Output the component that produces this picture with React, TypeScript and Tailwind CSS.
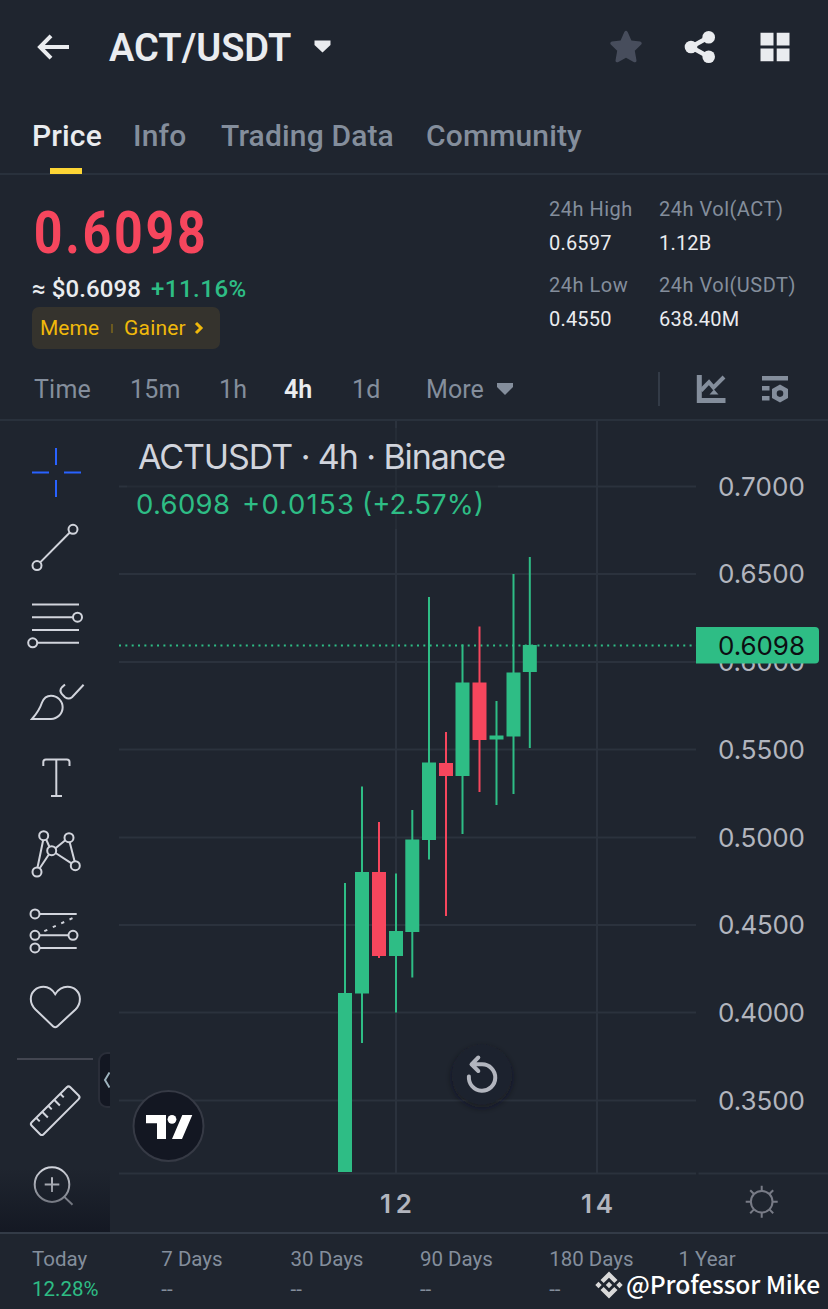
import React from 'react';

const TABS = ['Price', 'Info', 'Trading Data', 'Community'];
const TAB_WIDTHS = ['w-[101px]', 'w-[88px]', 'w-[205px]', 'w-[160px]'];

const STATS = [
  { label: '24h High', value: '0.6597' },
  { label: '24h Vol(ACT)', value: '1.12B' },
  { label: '24h Low', value: '0.4550' },
  { label: '24h Vol(USDT)', value: '638.40M' },
];

const INTERVALS = [
  { label: 'Time', width: 'w-[96px]' },
  { label: '15m', width: 'w-[89px]' },
  { label: '1h', width: 'w-[65px]' },
  { label: '4h', width: 'w-[68px]' },
  { label: '1d', width: 'w-[74px]' },
];

const PERIODS = [
  { label: 'Today', value: '12.28%' },
  { label: '7 Days', value: '--' },
  { label: '30 Days', value: '--' },
  { label: '90 Days', value: '--' },
  { label: '180 Days', value: '--' },
  { label: '1 Year', value: '--' },
];

// x, wick top, wick bottom, body top, body bottom, up
const CANDLES: [number, number, number, number, number, boolean][] = [
  [345, 883, 1172, 993, 1172, true],
  [362, 786.5, 1043, 872, 993.5, true],
  [379, 822, 958, 872, 956, false],
  [396, 873.5, 1012.5, 931, 956, true],
  [412.3, 810, 977.5, 839.5, 932, true],
  [429, 597, 859.5, 762.5, 840, true],
  [446, 732, 916, 763, 776, false],
  [462.5, 644.5, 834, 682.5, 776, true],
  [479.5, 626.5, 792, 682.5, 740, false],
  [496.5, 701, 805, 735.5, 739.5, true],
  [513.5, 574, 794, 672.5, 736.5, true],
  [529.8, 557, 748, 645, 672, true],
];

const PRICE_LINES = [
  { y: 486.5, label: '0.7000' },
  { y: 574, label: '0.6500' },
  { y: 662, label: '0.6000' },
  { y: 749.5, label: '0.5500' },
  { y: 837.5, label: '0.5000' },
  { y: 925, label: '0.4500' },
  { y: 1012.5, label: '0.4000' },
  { y: 1100.5, label: '0.3500' },
];

const Header: React.FC = () => (
  <header className="flex h-[94px] items-center">
    <svg className="ml-[36px] h-[28px] w-[34px]" viewBox="0 0 34 28" fill="none" stroke="#eaecef" strokeWidth="4">
      <path d="M4 14H33M15 2.8L4 14L15 25.2" />
    </svg>
    <h1 className="ml-[39px] w-[205px] pt-[3px] text-[38px] font-semibold text-[#eaecef]">ACT/USDT</h1>
    <svg className="h-[14px] w-[18px]" viewBox="0 0 18 14" fill="#eaecef">
      <path d="M.5 .5h16v4.5L8.500 12.500L.5 5z" />
    </svg>
    <svg className="ml-[277px] h-[34px] w-[34px]" viewBox="0 0 34 34" fill="#474d5c">
      <path d="M15.2 2.2q1.8-2.8 3.6 0l3.6 8.2 8.8 1.2q2.4 .8 1 3l-6.4 6.2 1.7 9.6q0 2.4-2.4 1.8L17 27.8l-8.1 4.4q-2.4 .6-2.4-1.8l1.7-9.6-6.4-6.2q-1.4-2.2 1-3l8.8-1.2z" />
    </svg>
    <svg className="ml-[40px] h-[34px] w-[34px]" viewBox="0 0 34 34" fill="#eaecef">
      <path d="M8 17L26 7M8 17L26 27" stroke="#eaecef" strokeWidth="4.4" />
      <circle cx="8" cy="17" r="6.3" />
      <circle cx="25.7" cy="7.3" r="6.3" />
      <circle cx="25.7" cy="26.7" r="6.3" />
    </svg>
    <svg className="ml-[43px] h-[30px] w-[30px]" viewBox="0 0 30 30" fill="#eaecef">
      <path d="M.5 .8h13v12.6H.5zM16.7 .8h12.8v12.6H16.7zM.5 16.6h13v12.6H.5zM16.7 16.6h12.8v12.6H16.7z" />
    </svg>
  </header>
);

const Tabs: React.FC = () => (
  <nav className="flex h-[81px] border-b-2 border-[#29313c] pl-[32px] text-[30px] font-medium tracking-[0.15px] whitespace-nowrap">
    {TABS.map((tab, i) => (
      <div key={tab} className={`${TAB_WIDTHS[i]} ${i === 0 ? 'text-[#eaecef]' : 'text-[#848e9c]'}`}>
        <div className="h-[74px] leading-[83px]">{tab}</div>
        {i === 0 && <div className="ml-[18px] h-[6px] w-[32px] bg-[#fcd535]" />}
      </div>
    ))}
  </nav>
);

const Summary: React.FC = () => (
  <section className="flex h-[183px]">
    <div className="w-[549px] pl-[32px]">
      <div className="h-[97px] origin-left scale-x-[0.85] pl-[2px] text-[59px] leading-[116px] font-bold tracking-[3.2px] text-[#f6465d]">0.6098</div>
      <div className="flex h-[35px] items-center text-[24px] leading-[35px] font-medium whitespace-nowrap">
        <span className="w-[119px] tracking-[0.1px] text-[#eaecef]">≈ $0.6098</span>
        <span className="tracking-[0.5px] text-[#2ebd85]">+11.16%</span>
      </div>
      <div className="flex h-[42px] w-[188px] items-center rounded-[7px] bg-[#35332d] pl-[8px] text-[21px] text-[#f0b90b]">
        <span className="w-[71px] pt-[2px]">Meme</span>
        <span className="mr-[11px] h-[9px] w-[2px] bg-[#6b5a20]" />
        <span className="w-[70px] pt-[2px] tracking-[0.2px]">Gainer</span>
        <svg className="h-[14px] w-[10px]" viewBox="0 0 10 14" fill="none" stroke="#f0b90b" strokeWidth="3">
          <path d="M2 2L7 7L2 12" />
        </svg>
      </div>
    </div>
    <div className="grid h-fit grid-cols-[110px_160px] gap-y-[8px] pt-[17px] text-[20px] whitespace-nowrap">
      {STATS.map((s) => (
        <div key={s.label} className="leading-[34px]">
          <div className="h-[34px] tracking-[0.5px] text-[#848e9c]">{s.label}</div>
          <div className="h-[34px] tracking-[0.2px] text-[#eaecef]">{s.value}</div>
        </div>
      ))}
    </div>
  </section>
);

const IntervalBar: React.FC = () => (
  <div className="flex h-[63px] items-center border-b-2 border-[#29313c] pl-[34px] text-[25px] text-[#848e9c]">
    {INTERVALS.map((it) => (
      <span
        key={it.label}
        className={`${it.width} pt-[3px] ${it.label === '4h' ? 'font-semibold text-[#eaecef]' : 'tracking-[0.2px]'}`}
      >
        {it.label}
      </span>
    ))}
    <span className="w-[70px] pt-[3px] tracking-[0.1px]">More</span>
    <svg className="h-[14px] w-[18px]" viewBox="0 0 18 14" fill="#848e9c">
      <path d="M1 1h16v4L9 13L1 5z" />
    </svg>
    <span className="ml-[144px] h-[34px] w-[2px] bg-[#333b47]" />
    <svg className="ml-[36px] h-[30px] w-[30px]" viewBox="0 0 30 30" fill="none" stroke="#848e9c">
      <path d="M3.3 1V26.5H29.5" strokeWidth="5" />
      <path d="M5 16.5L13 8.2L17.5 13.5L28 3" strokeWidth="4" />
      <path d="M13.5 20.5L18 15.5L22.5 20.5z" fill="#848e9c" stroke="none" />
    </svg>
    <svg className="ml-[35px] h-[30px] w-[30px]" viewBox="0 0 30 30" fill="#848e9c">
      <path d="M1 2h26v4.5H1zM1 12h7.5v4.5H1zM1 22h7.5v4.5H1z" />
      <path fillRule="evenodd" d="M19 10.5L27 15v9L19 28.5L11 24v-9zM19 16.3a3.3 3.3 0 1 0 0 6.6a3.3 3.3 0 1 0 0-6.6z" />
    </svg>
  </div>
);

const Tool: React.FC<{ children: React.ReactNode }> = ({ children }) => (
  <svg
    className="ml-[18px] h-[76.4px] w-[76px] shrink-0"
    viewBox="0 0 76 76.4"
    fill="none"
    stroke="#d1d4dc"
    strokeWidth="2"
  >
    {children}
  </svg>
);

const Toolbar: React.FC = () => (
  <aside className="relative flex h-[811px] w-[110px] shrink-0 flex-col pt-[13px]">
    <Tool>
      <path stroke="#2962ff" d="M38 14V31M38 46V63M14 38.5H31M46 38.5H63" />
    </Tool>
    <Tool>
      <circle cx="55" cy="19.3" r="4.5" />
      <circle cx="19" cy="55.6" r="4.5" />
      <path d="M22.2 52.4L51.8 22.5" />
    </Tool>
    <Tool>
      <path d="M14 17.4H61M14 30.2H55M14 43H61M19.2 55.8H61" />
      <circle cx="59.5" cy="30.2" r="4.5" />
      <circle cx="14.7" cy="55.8" r="4.5" />
    </Tool>
    <Tool>
      <path d="M14 56H33a11.6 11.6 0 0 0 0-23.3c-5 0-7.5 3-9 6.8C22.2 45 18 51.500 14 56z" />
      <path d="M47 21.500l-3 2.700q-3 3.300 0 7l3 3q3.700 2.700 7 0L65.600 21.800" />
    </Tool>
    <Tool>
      <path d="M25.3 26v-4q0-2.6 2.6-2.6h21q2.6 0 2.6 2.6v4M38.3 19.4V56M33 56h11" />
    </Tool>
    <Tool>
      <path d="M25.2 24L19.5 51.5M28.2 23.5L31.5 31M37.5 32.2L47.3 24.2M31 38.2L21.7 52.3M37.6 37L53.5 47.3M51.7 26.2L56.6 45.2" />
      <circle cx="25.7" cy="19.7" r="4.5" />
      <circle cx="51" cy="21.7" r="4.5" />
      <circle cx="33.7" cy="34.7" r="4.5" />
      <circle cx="19" cy="56" r="4.5" />
      <circle cx="57.3" cy="49.7" r="4.5" />
    </Tool>
    <Tool>
      <path d="M21.5 21.9H58.7M21.5 43.3H50.5M21.5 55.9H58.7" />
      <circle cx="17" cy="21.9" r="4.5" />
      <circle cx="17" cy="43.3" r="4.5" />
      <circle cx="55" cy="43.3" r="4.5" />
      <circle cx="17" cy="55.9" r="4.5" />
      <path d="M26.3 39.2l3-1.3M34.8 35.2l3-1.3M43.2 31.3l3-1.3M51.5 27.5l3-1.3" />
    </Tool>
    <Tool>
      <path d="M37.2 25.2C34 20 29.5 17.8 25.5 17.8C18.500 17.800 12.800 23 12.800 30C12.800 35 15 38 17.500 40.500L35.200 57.400q2 1.600 4 0L57.500 40.500c2.500-2.500 4.400-5.500 4.400-10.500C61.900 23 56.500 17.800 49.500 17.800C45 17.800 40.500 20 37.200 25.200z" />
    </Tool>
    <div className="mt-[13px] ml-[17px] h-[2px] w-[76px] shrink-0 bg-[#434651]" />
    <div className="mt-[13px] flex flex-col">
      <Tool>
        <g transform="translate(37.2 37.7) rotate(-45)">
          <rect x="-27.3" y="-8.4" width="54.6" height="16.8" rx="2.5" />
          <path d="M-18.5 -8.4v5M-10 -8.4v8M-1.5 -8.4v5M7 -8.4v8M15.5 -8.4v5" />
        </g>
      </Tool>
      <Tool>
        <circle cx="34" cy="34.6" r="17.3" />
        <path d="M34 27.3v14.6M26.7 34.6h14.6M46.3 46.9L54.5 54.8" />
      </Tool>
    </div>
    <div className="absolute bottom-0 left-0 h-[64px] w-[110px] bg-linear-to-b from-[#131722]/0 to-[#131722]/90" />
    <div className="absolute top-[631px] right-0 flex h-[56px] w-[12px] items-center justify-end rounded-l-[9px] border-2 border-r-0 border-[#2a2e39] bg-[#131722]">
      <svg className="h-[18px] w-[7px]" viewBox="0 0 7 18" fill="none" stroke="#9db2bd" strokeWidth="2">
        <path d="M6.5 1.5L2 9L6.5 16.5" />
      </svg>
    </div>
  </aside>
);

const Chart: React.FC = () => (
  <svg className="h-[811px] w-[718px]" viewBox="110 421 718 811" fontFamily="Inter, sans-serif">
    <defs>
      <filter id="shadow" x="-50%" y="-50%" width="200%" height="200%">
        <feDropShadow dx="0" dy="3" stdDeviation="3.5" floodColor="#11151d" floodOpacity="0.6" />
      </filter>
    </defs>
    <g stroke="#2b323d" strokeWidth="2">
      {PRICE_LINES.map((l) => (
        <line key={l.label} x1="119" x2="696" y1={l.y} y2={l.y} />
      ))}
      <path d="M396 421V1173M597 421V1173M119 1173.5H696M698.5 1173.5H828" />
    </g>
    <rect x="127" y="428" width="371" height="101" fill="#1f252f" opacity="0.5" />
    <line x1="119" x2="696" y1="645.5" y2="645.5" stroke="#2ebd85" strokeWidth="2" strokeDasharray="2 4.34" />
    {CANDLES.map(([x, high, low, top, bottom, up]) => (
      <g key={x} fill={up ? '#2ebd85' : '#f6465d'}>
        <rect x={x - 1} y={high} width="2" height={low - high} />
        <rect x={x - 7} y={top} width="14" height={bottom - top} />
      </g>
    ))}

    <text x="138" y="469" fontSize="34" fill="#d1d4dc" textLength="368">ACTUSDT · 4h · Binance</text>
    <g fontSize="27.5" fill="#2ebd85">
      <text x="136" y="514" textLength="94">0.6098</text>
      <text x="242" y="514" textLength="112">+0.0153</text>
      <text x="362" y="514" textLength="122">(+2.57%)</text>
    </g>

    <g fontSize="26" fill="#b2b5be">
      {PRICE_LINES.map((l) => (
        <text key={l.label} x="718" y={l.y + 9} textLength="87">{l.label}</text>
      ))}
    </g>
    <path d="M696 627h119q4 0 4 4v28.5q0 4-4 4H696z" fill="#2ebd85" />
    <text x="718" y="654.5" fontSize="26" fill="#0c0e12" textLength="87">0.6098</text>
    <g fontSize="26" fontWeight="600" fill="#b2b5be">
      <text x="380" y="1213" textLength="32">12</text>
      <text x="581" y="1213" textLength="32">14</text>
    </g>

    <circle cx="168.5" cy="1126" r="35" fill="#131722" stroke="#363a45" strokeWidth="2" />
    <g fill="#fff">
      <path d="M146 1115h20v24h-9v-15.7h-11zM182.3 1115h10l-10.3 24h-10z" />
      <circle cx="172" cy="1119.3" r="4.4" />
    </g>

    <circle cx="482" cy="1074.5" r="30" fill="#1e222d" filter="url(#shadow)" />
    <path
      d="M468.9 1076.5a13.2 13.2 0 1 0 13.2-12.2h-10M478.3 1057.5L471.5 1064.3L478.3 1071"
      fill="none"
      stroke="#b2b5be"
      strokeWidth="4"
      strokeLinecap="round"
      strokeLinejoin="round"
    />

    <g transform="translate(761.7 1201.7)" fill="none" stroke="#787b86" strokeWidth="2">
      <circle r="10.8" />
      <path d="M0-11V-16M0 11V16M-11 0H-16M11 0H16M7.7-7.7L11.5-11.5M-7.7-7.7L-11.5-11.5M7.7 7.7L11.5 11.5M-7.7 7.7L-11.5 11.5" />
    </g>
  </svg>
);

const Footer: React.FC = () => (
  <footer className="grid h-[77px] grid-cols-[repeat(6,129.3px)] border-t-2 border-[#333b47] pt-[10px] pl-[32px] text-[20.5px] whitespace-nowrap">
    {PERIODS.map((p) => (
      <div key={p.label} className="leading-[30px] text-[#848e9c]">
        <div>{p.label}</div>
        <div className={p.value === '--' ? '' : 'text-[#2ebd85]'}>{p.value}</div>
      </div>
    ))}
  </footer>
);

const Watermark: React.FC = () => (
  <div className="absolute right-[8px] bottom-[6px] flex items-center">
    <svg className="mr-[3px] h-[28px] w-[28px]" viewBox="0 0 28 28" fill="#d9d9d9">
      <path d="M14 .5L22.5 9L19.3 12L14 6.7L8.7 12L5.5 9zM14 27.5L22.5 19L19.3 16L14 21.3L8.7 16L5.5 19zM14 10.8L17.2 14L14 17.2L10.8 14zM3.500 10.800L6.700 14L3.500 17.200L.3 14zM24.500 10.800L27.700 14L24.500 17.200L21.300 14z" />
    </svg>
    <span className="pb-px font-['Noto_Sans_CJK_SC',sans-serif] text-[24.5px] leading-[36px] font-medium tracking-[-0.1px] whitespace-nowrap text-white">
      @Professor Mike
    </span>
  </div>
);

const App: React.FC = () => {
  return (
    <div className="relative h-[1309px] w-[828px] overflow-hidden bg-[#1f252f] font-[Roboto,sans-serif]">
      <Header />
      <Tabs />
      <Summary />
      <IntervalBar />
      <div className="flex h-[811px]">
        <Toolbar />
        <Chart />
      </div>
      <Footer />
      <Watermark />
    </div>
  );
};

export default App;
